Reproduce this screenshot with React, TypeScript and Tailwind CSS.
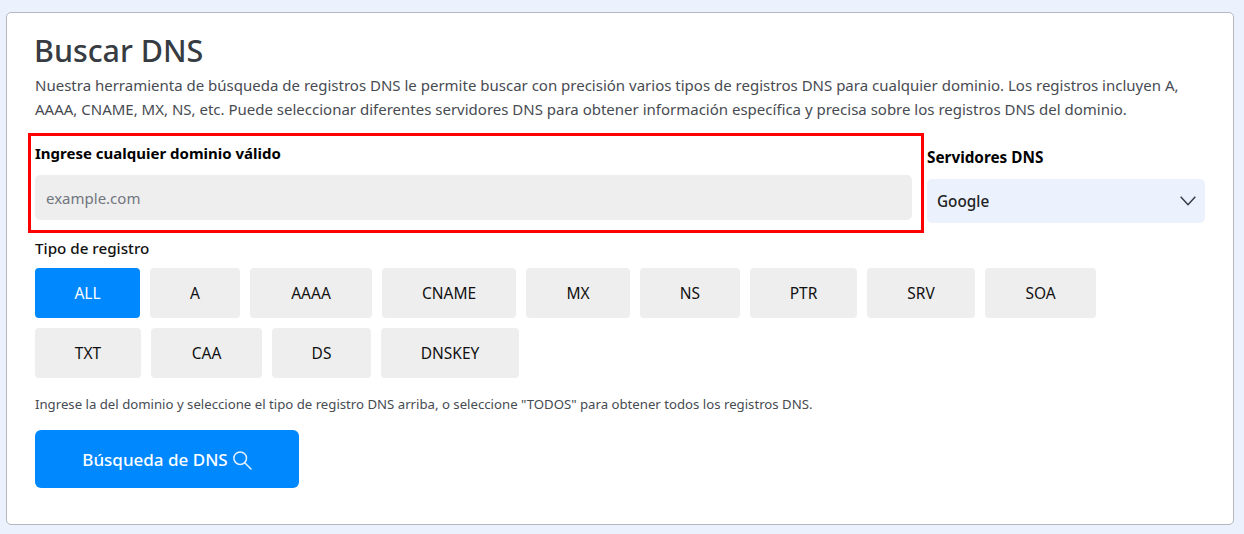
import React from "react";

const row1 = [
  { label: "ALL", width: "w-[105px]" },
  { label: "A", width: "w-[90px]" },
  { label: "AAAA", width: "w-[122px]" },
  { label: "CNAME", width: "w-[134px]" },
  { label: "MX", width: "w-[104px]" },
  { label: "NS", width: "w-[100px]" },
  { label: "PTR", width: "w-[107px]" },
  { label: "SRV", width: "w-[108px]" },
  { label: "SOA", width: "w-[111px]" },
];
const row2 = [
  { label: "TXT", width: "w-[106px]" },
  { label: "CAA", width: "w-[111px]" },
  { label: "DS", width: "w-[99px]" },
  { label: "DNSKEY", width: "w-[138px]" },
];

function TypeButton({ label, width }: { label: string; width: string }) {
  const active = label === "ALL";
  return (
    <button
      className={
        (active ? "bg-[#0088ff] text-white " : "bg-[#eeeeee] text-[#111111] ") +
        "h-[50px] rounded-[4px] pt-[2px] text-[15.5px] " +
        width
      }
    >
      {label}
    </button>
  );
}

export default function App() {
  return (
    <div className="h-[534px] overflow-hidden bg-[#ebf2fd] pl-[6px] pr-[10px] pt-3 font-['Noto_Sans','Open_Sans',sans-serif]">
      <div className="h-[513px] rounded-[5px] border border-[#b4b7bd] bg-white pl-[28px] pr-[28px] pt-[16px]">
        <h1 className="-ml-px text-[30.4px] font-medium leading-[44px] text-[#373b42]">Buscar DNS</h1>
        <p className="text-[15px] leading-[24px] text-[#474b52]">
          Nuestra herramienta de búsqueda de registros DNS le permite buscar con precisión varios tipos de registros DNS para cualquier dominio. Los registros incluyen A, AAAA, CNAME, MX, NS, etc. Puede seleccionar diferentes servidores DNS para obtener información específica y precisa sobre los registros DNS del dominio.
        </p>
        <div className="mt-[12px] flex items-start">
          <div className="-ml-[7px] h-[100px] w-[896px] border-[3px] border-[#ff0000] pl-1 pt-[6px]">
            <label className="block text-[15px] font-bold leading-[22px] text-black">Ingrese cualquier dominio válido</label>
            <input
              placeholder="example.com"
              className="mt-[11px] h-[45px] w-[877px] rounded-[5px] bg-[#eeeeee] px-[11px] text-[15px] placeholder:text-[#70757e]"
            />
          </div>
          <div className="ml-[3px] w-[278px] pt-[13px]">
            <div className="text-[15.3px] font-bold leading-[22px] text-black">Servidores DNS</div>
            <div className="mt-[11px] flex h-[44px] items-center justify-between rounded-[5px] bg-[#ebf2fd] pl-[10px] pr-[9px] text-[15.3px] font-medium text-[#222222]">
              <span>Google</span>
              <svg width="16" height="10" viewBox="0 0 16 10" fill="none" stroke="#333840" strokeWidth="1.4">
                <polyline points="0.7,0.7 8,8.8 15.3,0.7" />
              </svg>
            </div>
          </div>
        </div>
        <div className="mt-[4px] text-[15.2px] font-medium leading-[22px] text-[#111111]">Tipo de registro</div>
        <div className="mt-[9px] flex gap-[10px]">
          {row1.map((b) => (
            <TypeButton key={b.label} label={b.label} width={b.width} />
          ))}
        </div>
        <div className="mt-[10px] flex gap-[10px]">
          {row2.map((b) => (
            <TypeButton key={b.label} label={b.label} width={b.width} />
          ))}
        </div>
        <p className="mt-[16px] text-[13.2px] leading-[20px] text-[#474b52]">
          Ingrese la del dominio y seleccione el tipo de registro DNS arriba, o seleccione "TODOS" para obtener todos los registros DNS.
        </p>
        <button className="mt-[16px] flex h-[58px] w-[264px] items-center justify-center gap-[5px] rounded-[6px] bg-[#0088ff] pt-[2px] text-[17px] font-medium text-white">
          Búsqueda de DNS
          <svg width="19" height="19" viewBox="0 0 19 19" fill="none" stroke="#e4f1ff" strokeWidth="1.5" strokeLinecap="round">
            <circle cx="7.2" cy="7.2" r="6.3" />
            <line x1="12" y1="12" x2="18" y2="18" />
          </svg>
        </button>
      </div>
    </div>
  );
}
